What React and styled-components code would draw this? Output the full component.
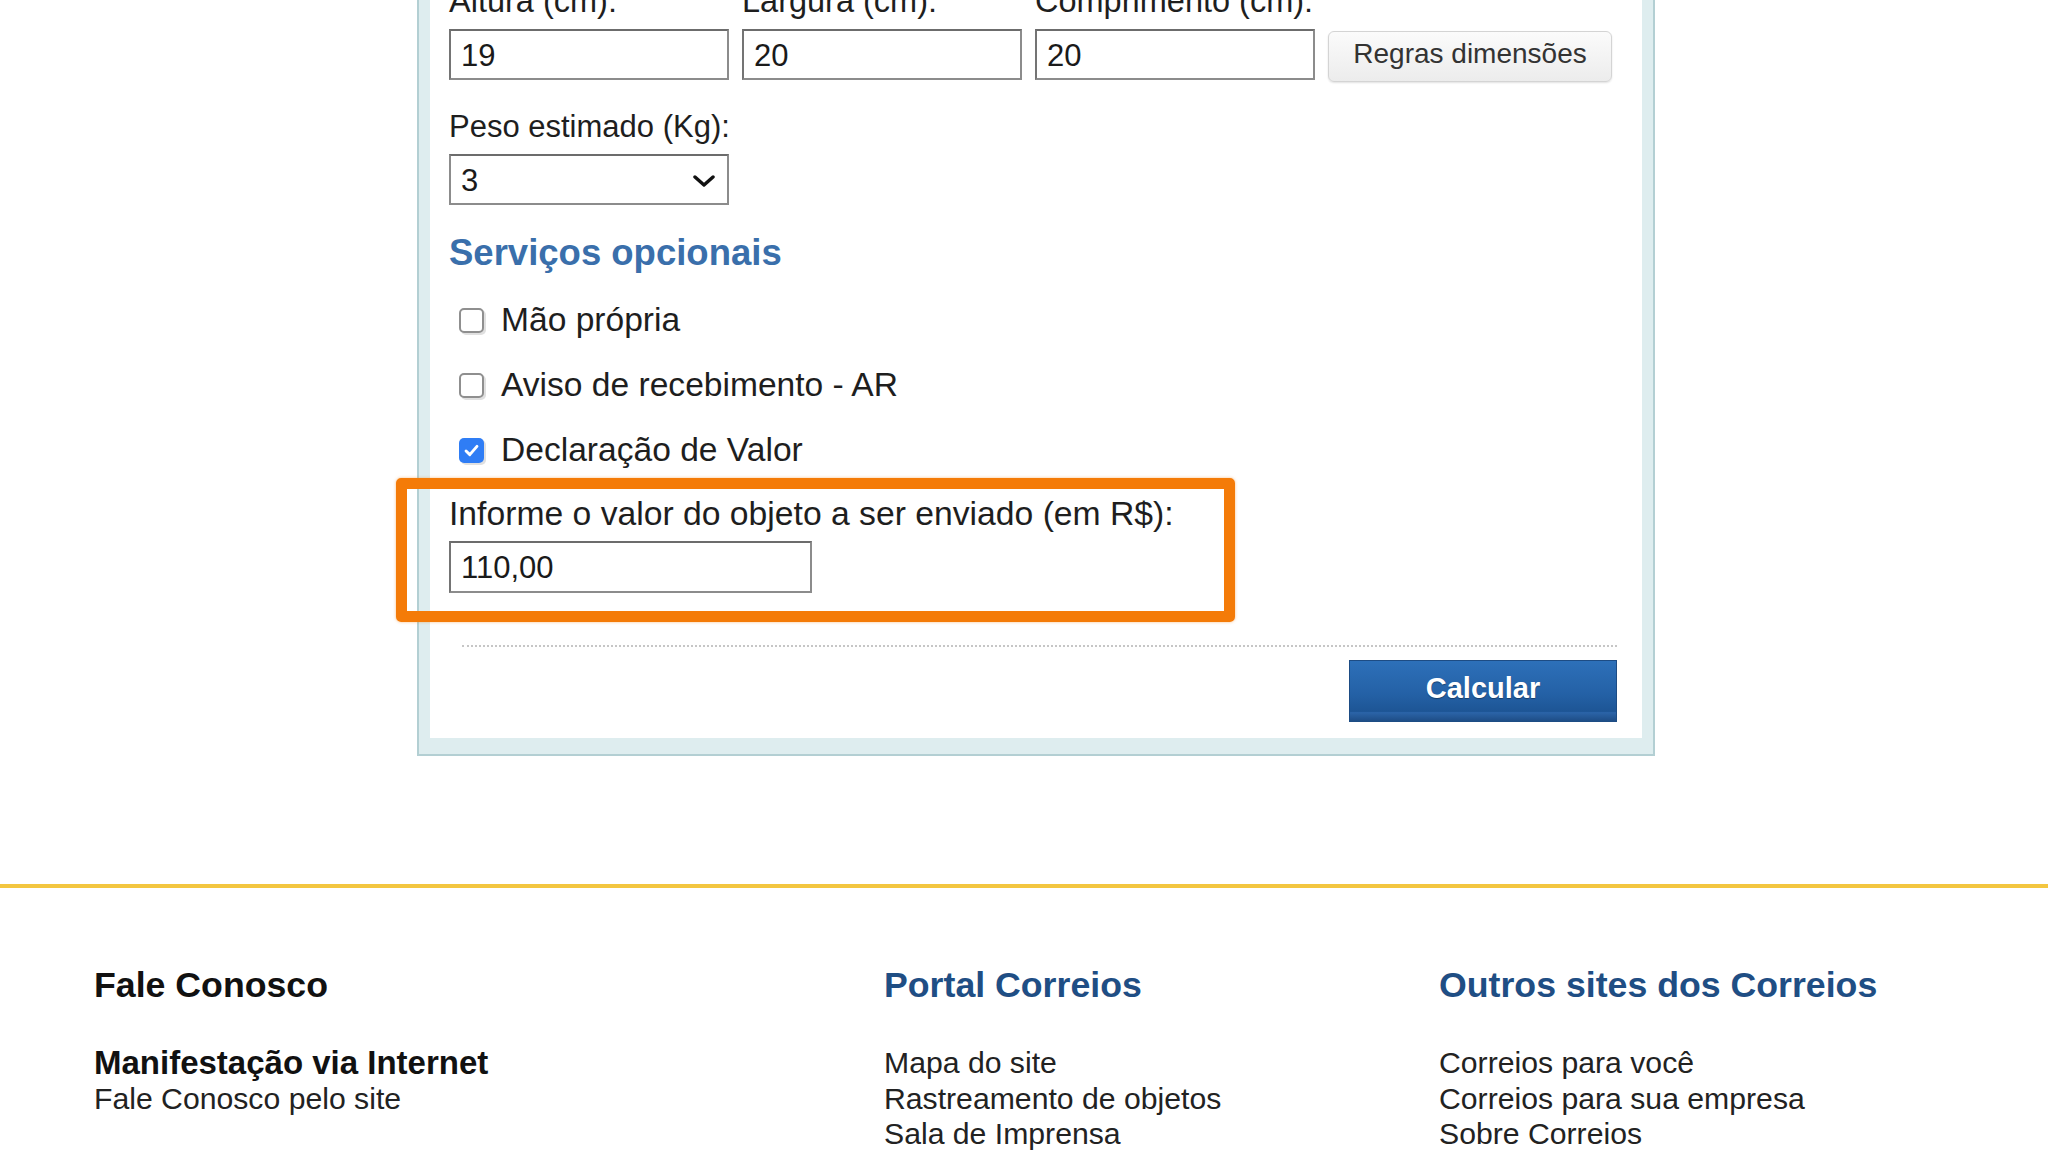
import styled, { createGlobalStyle } from "styled-components";

const GlobalStyle = createGlobalStyle`
  html, body {
    margin: 0;
    padding: 0;
    background: #ffffff;
  }
  body {
    font-family: "Liberation Sans", Arial, Helvetica, sans-serif;
    color: #222222;
    overflow: hidden;
  }
`;

const Page = styled.div`
  width: 2048px;
  height: 1152px;
  overflow: hidden;
  display: flex;
  flex-direction: column;
`;

const Panel = styled.div`
  width: 1238px;
  box-sizing: border-box;
  margin-left: 417px;
  padding: 0 11px 16px 11px;
  background: #deedef;
  border: 2px solid #b3cfd3;
  border-top: none;
`;

const Inner = styled.div`
  background: #ffffff;
  padding: 0 25px 16px 19px;
  display: flex;
  flex-direction: column;
`;

const FieldRow = styled.div`
  display: flex;
  gap: 13px;
  margin-top: -17px;
`;

const Field = styled.div`
  display: flex;
  flex-direction: column;
  margin-top: ${(p) => p.$top || 0}px;
`;

const Label = styled.label`
  font-size: ${(p) => p.$size || 31}px;
  line-height: ${(p) => p.$line || 36}px;
  color: #1e1e1e;
  margin-bottom: ${(p) => p.$gap || 9}px;
  white-space: nowrap;
`;

const TextInput = styled.input`
  box-sizing: border-box;
  width: ${(p) => p.$width || 280}px;
  height: ${(p) => p.$height || 51}px;
  border: 2px solid #8c8c8c;
  border-top-color: #6c6c6c;
  border-left-color: #747474;
  padding: 2px 0 0 10px;
  font-family: inherit;
  font-size: 31px;
  color: #1a1a1a;
  background: #fff;
  outline: none;
`;

const GrayButton = styled.button`
  align-self: flex-end;
  margin-bottom: -2px;
  width: 284px;
  height: 51px;
  box-sizing: border-box;
  border: 1px solid #d4d4d4;
  border-radius: 6px;
  background: linear-gradient(#fbfbfb, #ececec);
  box-shadow: 0 1px 2px rgba(0, 0, 0, 0.12);
  font-family: inherit;
  font-size: 28px;
  color: #333;
  padding: 0 0 6px;
`;

const SelectBox = styled.div`
  box-sizing: border-box;
  width: 280px;
  height: 51px;
  border: 2px solid #8c8c8c;
  border-top-color: #6c6c6c;
  display: flex;
  align-items: center;
  justify-content: space-between;
  padding: 2px 12px 0 10px;
  font-size: 31px;
  color: #1a1a1a;
`;

const SectionTitle = styled.h2`
  margin: 27px 0 0;
  font-size: 36.5px;
  line-height: 42px;
  font-weight: 700;
  color: #3a6fab;
`;

const CheckList = styled.div`
  display: flex;
  flex-direction: column;
  gap: 15px;
  margin-top: 21px;
`;

const CheckRow = styled.div`
  height: 50px;
  display: flex;
  align-items: center;
  gap: 17px;
  padding-left: 10px;
  font-size: 33.6px;
  color: #1e1e1e;
`;

const Box = styled.span`
  width: 25px;
  height: 25px;
  box-sizing: border-box;
  border-radius: 5px;
  border: ${(p) => (p.$checked ? "none" : "2px solid #8f8f8f")};
  background: ${(p) => (p.$checked ? "#2f7df5" : "#ffffff")};
  box-shadow: 2px 2px 0 #e0e0e0;
  display: flex;
  align-items: center;
  justify-content: center;
  flex-shrink: 0;
`;

const ValueSection = styled.div`
  position: relative;
  display: flex;
  flex-direction: column;
  margin-top: 19px;
`;

const Highlight = styled.div`
  position: absolute;
  left: -53px;
  top: -16px;
  width: 839px;
  height: 144px;
  box-sizing: border-box;
  border: 11px solid #f47b08;
  border-radius: 5px;
  box-shadow: 0 0 3px rgba(244, 123, 8, 0.5);
  pointer-events: none;
`;

const Divider = styled.div`
  margin: 52px 0 0 13px;
  border-top: 2px dotted #c6c6c6;
`;

const BlueButton = styled.button`
  align-self: flex-end;
  margin-top: 13px;
  width: 268px;
  height: 62px;
  border: 1px solid #1d4c84;
  background: linear-gradient(
    #2d70b9 0%,
    #2461a6 55%,
    #1d5595 84%,
    #2b64a8 86%,
    #1e4d86 100%
  );
  font-family: inherit;
  font-size: 29px;
  font-weight: 700;
  color: #ffffff;
  text-shadow: 0 1px 1px rgba(0, 0, 0, 0.35);
  padding: 0 0 6px;
`;

const Footer = styled.footer`
  margin-top: 128px;
  border-top: 4px solid #f3c640;
  padding: 77px 0 0 94px;
  display: grid;
  grid-template-columns: 790px 555px auto;
`;

const Column = styled.div`
  display: flex;
  flex-direction: column;
`;

const ColTitle = styled.h3`
  margin: 0 0 40px;
  font-size: 35.7px;
  line-height: 40px;
  font-weight: 700;
  color: ${(p) => (p.$blue ? "#1f4e84" : "#111111")};
`;

const Line = styled.div`
  font-size: ${(p) => (p.$strong ? 33 : 30.2)}px;
  line-height: 35.5px;
  font-weight: ${(p) => (p.$strong ? 700 : 400)};
  color: ${(p) => (p.$strong ? "#111111" : "#222222")};
  white-space: nowrap;
`;

const Check = () => (
  <svg width="17" height="17" viewBox="0 0 14 14">
    <path
      d="M2.5 7.4 L5.6 10.4 L11.5 3.6"
      fill="none"
      stroke="#ffffff"
      strokeWidth="2.4"
      strokeLinecap="round"
      strokeLinejoin="round"
    />
  </svg>
);

const Chevron = () => (
  <svg width="22" height="12" viewBox="0 0 22 12">
    <path
      d="M2 2 L11 10 L20 2"
      fill="none"
      stroke="#111"
      strokeWidth="3.4"
      strokeLinecap="round"
      strokeLinejoin="round"
    />
  </svg>
);

const dims = [
  { label: "Altura (cm):", value: "19" },
  { label: "Largura (cm):", value: "20" },
  { label: "Comprimento (cm):", value: "20" },
];

const services = [
  { label: "Mão própria", checked: false },
  { label: "Aviso de recebimento - AR", checked: false },
  { label: "Declaração de Valor", checked: true },
];

export default function App() {
  return (
    <Page>
      <GlobalStyle />
      <Panel>
        <Inner>
          <FieldRow>
            {dims.map((d) => (
              <Field key={d.label}>
                <Label $size={32.5} $gap={10}>
                  {d.label}
                </Label>
                <TextInput readOnly defaultValue={d.value} />
              </Field>
            ))}
            <GrayButton>Regras dimensões</GrayButton>
          </FieldRow>

          <Field $top={29}>
            <Label>Peso estimado (Kg):</Label>
            <SelectBox>
              <span>3</span>
              <Chevron />
            </SelectBox>
          </Field>

          <SectionTitle>Serviços opcionais</SectionTitle>
          <CheckList>
            {services.map((s) => (
              <CheckRow key={s.label}>
                <Box $checked={s.checked}>{s.checked && <Check />}</Box>
                <span>{s.label}</span>
              </CheckRow>
            ))}
          </CheckList>

          <ValueSection>
            <Label $size={33.7} $line={38}>
              Informe o valor do objeto a ser enviado (em R$):
            </Label>
            <TextInput readOnly defaultValue="110,00" $width={363} $height={52} />
            <Highlight />
          </ValueSection>

          <Divider />
          <BlueButton>Calcular</BlueButton>
        </Inner>
      </Panel>

      <Footer>
        <Column>
          <ColTitle>Fale Conosco</ColTitle>
          <Line $strong>Manifestação via Internet</Line>
          <Line>Fale Conosco pelo site</Line>
        </Column>
        <Column>
          <ColTitle $blue>Portal Correios</ColTitle>
          <Line>Mapa do site</Line>
          <Line>Rastreamento de objetos</Line>
          <Line>Sala de Imprensa</Line>
        </Column>
        <Column>
          <ColTitle $blue>Outros sites dos Correios</ColTitle>
          <Line>Correios para você</Line>
          <Line>Correios para sua empresa</Line>
          <Line>Sobre Correios</Line>
        </Column>
      </Footer>
    </Page>
  );
}
